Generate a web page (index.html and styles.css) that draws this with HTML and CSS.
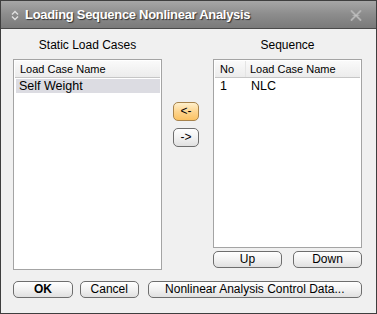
FILE: index.html
```html
<!DOCTYPE html>
<html>
<head>
<meta charset="utf-8">
<link rel="stylesheet" href="styles.css">
</head>
<body>
<div class="window">
  <div class="titlebar">
    <svg class="ticon" width="8" height="11" viewBox="0 0 8 11">
      <path d="M1 4.5 L4 1.5 L7 4.5" fill="none" stroke="#e0e0e0" stroke-width="1.4"/>
      <path d="M1 6.5 L4 9.5 L7 6.5" fill="none" stroke="#e0e0e0" stroke-width="1.4"/>
    </svg>
    <span class="title">Loading Sequence Nonlinear Analysis</span>
    <svg class="close" width="12" height="11" viewBox="0 0 12 11">
      <path d="M1.5 1 L10.5 10 M10.5 1 L1.5 10" stroke="#b4b4b4" stroke-width="1.8" stroke-linecap="round"/>
      <path d="M2.5 5.5 L9.5 5.5" stroke="#d8d8d8" stroke-width="0.8" opacity="0.5"/>
    </svg>
  </div>
  <div class="content">
    <div class="main">
      <div class="col">
        <div class="label">Static Load Cases</div>
        <div class="list list-left">
          <div class="hdr"><span class="hcell hname">Load Case Name</span></div>
          <div class="row sel"><span class="cell">Self Weight</span></div>
        </div>
      </div>
      <div class="mid">
        <button class="btn arrow hot">&lt;-</button>
        <button class="btn arrow">-&gt;</button>
      </div>
      <div class="col">
        <div class="label">Sequence</div>
        <div class="list list-right">
          <div class="hdr"><span class="hcell hno">No</span><span class="hcell hname2">Load Case Name</span></div>
          <div class="row"><span class="cell cno">1</span><span class="cell">NLC</span></div>
        </div>
        <div class="updown">
          <button class="btn ud">Up</button>
          <button class="btn ud">Down</button>
        </div>
      </div>
    </div>
    <div class="bottom">
      <button class="btn ok">OK</button>
      <button class="btn cancel">Cancel</button>
      <button class="btn ctrl">Nonlinear Analysis Control Data...</button>
    </div>
  </div>
</div>
</body>
</html>
```
FILE: styles.css
```css
html, body {
  margin: 0;
  padding: 0;
  background: #f0f0f0;
}
.window {
  width: 377px;
  height: 314px;
  box-sizing: border-box;
  border: 1px solid #3e3e3e;
  background: #f0f0f0;
  font-family: "Liberation Sans", Arial, sans-serif;
  font-size: 12px;
  color: #000;
}
.titlebar {
  height: 27px;
  border-bottom: 1px solid #4a4a4a;
  background: linear-gradient(#a6a6a6, #8c8c8c 50%, #7a7a7a);
  display: flex;
  align-items: center;
  padding-left: 10px;
  box-sizing: content-box;
}
.ticon {
  margin-top: 1px;
}
.title {
  margin-left: 6px;
  color: #fff;
  font-weight: bold;
  font-size: 13px;
  text-shadow: 1px 1px 1px #303030;
  flex: 1;
  letter-spacing: -0.3px;
}
.close {
  margin-right: 14px;
  margin-top: 2px;
}
.content {
  padding: 7px 14px 0 12px;
}
.main {
  display: flex;
}
.col {
  width: 149px;
}
.label {
  height: 18px;
  line-height: 18px;
  text-align: center;
  margin-bottom: 5px;
}
.list {
  background: #fff;
  border: 1px solid #a4a4a4;
  box-sizing: border-box;
  padding: 1px;
}
.list-left { height: 211px; }
.list-right { height: 189px; }
.hdr {
  height: 16px;
  display: flex;
  background: linear-gradient(#fafafa, #ececec);
  border-bottom: 1px solid #c6c6c6;
  font-size: 11px;
  line-height: 16px;
}
.hcell {
  display: block;
  height: 16px;
  padding-left: 5px;
}
.hname { flex: 1; }
.hno {
  width: 25px;
  padding-left: 5px;
  border-right: 1px solid #e4e4e4;
}
.hname2 {
  flex: 1;
  padding-left: 4px;
}
.row {
  height: 14px;
  line-height: 14px;
  margin-top: 1px;
  display: flex;
  font-size: 12.5px;
}
.row.sel {
  background: #dcdce2;
  margin-left: 1px;
}
.cell {
  padding-left: 3px;
}
.row .cno {
  width: 28px;
  padding-left: 5px;
}
.mid {
  width: 51px;
  padding-top: 66px;
  padding-left: 11px;
  box-sizing: border-box;
  display: flex;
  flex-direction: column;
  gap: 7px;
}
.btn {
  font-family: "Liberation Sans", Arial, sans-serif;
  font-size: 12px;
  color: #000;
  border: 1px solid #6e6e6e;
  border-radius: 5px;
  background: linear-gradient(#ffffff, #f2f2f2 50%, #e0e0e0);
  padding: 0;
  margin: 0;
  height: 17px;
  line-height: 15px;
  box-sizing: border-box;
  text-align: center;
}
.arrow {
  width: 26px;
  height: 19px;
  line-height: 17px;
}
.arrow.hot {
  border-color: #a7834c;
  background: linear-gradient(#fff0cc, #fdd590 50%, #fbc262);
}
.updown {
  display: flex;
  justify-content: space-between;
  margin-top: 3px;
}
.ud {
  width: 69px;
}
.bottom {
  display: flex;
  margin-top: 11px;
}
.ok {
  width: 60px;
  font-weight: bold;
}
.cancel {
  width: 59px;
  margin-left: 7px;
}
.ctrl {
  width: 215px;
  margin-left: 9px;
}
```
